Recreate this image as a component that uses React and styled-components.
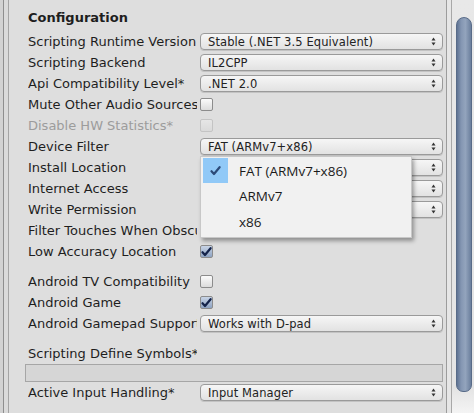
import React from "react";
import styled, { createGlobalStyle } from "styled-components";

const Global = createGlobalStyle`
  html, body { margin: 0; padding: 0; }
  body { width: 474px; height: 413px; overflow: hidden; background: #dedede; }
`;

const Window = styled.div`
  display: flex;
  width: 474px;
  height: 413px;
  background: #dedede;
  font-family: "DejaVu Sans", sans-serif;
  color: #1e1e1e;
`;

const Gutter = styled.div`
  width: 3px;
  background: #d2d2d2;
  border-right: 1px solid #8e8e8e;
  flex: none;
`;

const Gutter2 = styled.div`
  width: 4px;
  background: #dadada;
  border-right: 1px solid #a4a4a4;
  flex: none;
`;

const Panel = styled.div`
  flex: none;
  width: 438px;
  padding: 8px 0 0 19px;
  box-sizing: border-box;
  position: relative;
  border-right: 1px solid #9c9c9c;
`;

const Edge = styled.div`
  width: 4px;
  flex: none;
  background: #e6e6e6;
  border-right: 1px solid #a8a8a8;
`;

const Track = styled.div`
  flex: 1;
  background: linear-gradient(to bottom, #e8e8e8 0%, #e4e4e4 94%, #f4f4f4 100%);
  padding: 17px 2px 0 4px;
  box-sizing: border-box;
`;

const Thumb = styled.div`
  height: 373px;
  border-radius: 8px 8px 7px 7px;
  background: linear-gradient(to right, #5f7393 0%, #8496b2 30%, #93a4bd 60%, #6b7f9d 100%);
  border: 1px solid #586b88;
`;

const Heading = styled.div`
  height: 20px;
  line-height: 20px;
  margin-bottom: 3px;
  font-weight: bold;
  font-size: 13px;
`;

const Row = styled.div`
  display: grid;
  grid-template-columns: 172px 243px;
  align-items: center;
  height: 21px;
`;

const Label = styled.div`
  font-size: 13px;
  white-space: nowrap;
  overflow: hidden;
  max-width: 169px;
  color: ${(p) => (p.disabled ? "#9c9c9c" : "#1e1e1e")};
`;

const Gap = styled.div`
  height: 9px;
`;

const Popup = styled.div`
  display: flex;
  align-items: center;
  height: 17px;
  box-sizing: border-box;
  border: 1px solid #9a9a9a;
  border-radius: 4px;
  background: linear-gradient(to bottom, #f6f6f6, #e2e2e2);
  padding: 0 6px 0 7px;
  font-size: 11.5px;
  color: #222;
  box-shadow: 0 1px 0 rgba(0, 0, 0, 0.12);
`;

const PopupText = styled.span`
  flex: 1;
  white-space: nowrap;
  overflow: hidden;
  letter-spacing: 0.1px;
`;

const Check = styled.div`
  width: 13px;
  height: 13px;
  box-sizing: border-box;
  border: 1px solid ${(p) => (p.disabled ? "#c4c4c4" : "#8c8c8c")};
  border-radius: 2px;
  background: ${(p) =>
    p.checked
      ? "linear-gradient(to bottom, #c8d4e6, #8ea3c2)"
      : p.disabled
      ? "linear-gradient(to bottom, #e6e6e6, #dadada)"
      : "linear-gradient(to bottom, #fbfbfb, #dcdcdc)"};
  display: flex;
  align-items: center;
  justify-content: center;
`;

const TextField = styled.div`
  height: 18px;
  margin-left: -3px;
  width: 418px;
  box-sizing: border-box;
  border: 1px solid #a6a6a6;
  background: #d6d6d6;
`;

const Menu = styled.div`
  position: absolute;
  left: 191px;
  top: 156px;
  width: 212px;
  height: 82px;
  box-sizing: border-box;
  background: #f1f1f1;
  border: 1px solid #c8c8c8;
  box-shadow: 2px 3px 4px rgba(0, 0, 0, 0.35);
  padding-top: 1px;
  font-family: "Open Sans", "Noto Sans", sans-serif;
  font-size: 13.5px;
  color: #1a1a1a;
`;

const MenuItem = styled.div`
  display: flex;
  align-items: center;
  height: 25.5px;
`;

const Tick = styled.div`
  width: 25px;
  height: 25px;
  margin-left: 2px;
  background: ${(p) => (p.on ? "#91c9f7" : "transparent")};
  display: flex;
  align-items: center;
  justify-content: center;
`;

const ItemText = styled.span`
  margin-left: 11px;
  white-space: nowrap;
`;

const Arrows = () => (
  <svg width="5" height="9" viewBox="0 0 5 9">
    <path d="M2.5 0.5 L4.5 3.5 L0.5 3.5 Z" fill="#333" />
    <path d="M2.5 8.5 L4.5 5.5 L0.5 5.5 Z" fill="#333" />
  </svg>
);

const CheckMark = ({ color = "#14234a" }) => (
  <svg width="11" height="10" viewBox="0 0 11 10">
    <path d="M1.5 5.2 L4 8 L9.6 1.2" fill="none" stroke={color} strokeWidth="2.2" strokeLinecap="round" strokeLinejoin="round" />
  </svg>
);

const Select = ({ value }) => (
  <Popup>
    <PopupText>{value}</PopupText>
    <Arrows />
  </Popup>
);

const rows1 = [
  { label: "Scripting Runtime Version", select: "Stable (.NET 3.5 Equivalent)" },
  { label: "Scripting Backend", select: "IL2CPP" },
  { label: "Api Compatibility Level*", select: ".NET 2.0" },
  { label: "Mute Other Audio Sources", check: false },
  { label: "Disable HW Statistics*", check: false, disabled: true },
  { label: "Device Filter", select: "FAT (ARMv7+x86)" },
  { label: "Install Location", select: "Prefer External" },
  { label: "Internet Access", select: "Auto" },
  { label: "Write Permission", select: "Internal" },
  { label: "Filter Touches When Obscured", check: false },
  { label: "Low Accuracy Location", check: true },
];

const rows2 = [
  { label: "Android TV Compatibility", check: false },
  { label: "Android Game", check: true },
  { label: "Android Gamepad Support Level", select: "Works with D-pad" },
];

const renderRow = (r) => (
  <Row key={r.label}>
    <Label disabled={r.disabled}>{r.label}</Label>
    {r.select !== undefined ? (
      <Select value={r.select} />
    ) : r.label === "Filter Touches When Obscured" ? (
      <div />
    ) : (
      <Check checked={r.check} disabled={r.disabled}>
        {r.check && <CheckMark />}
      </Check>
    )}
  </Row>
);

const menuItems = ["FAT (ARMv7+x86)", "ARMv7", "x86"];

export default function App() {
  return (
    <Window>
      <Global />
      <Gutter />
      <Gutter2 />
      <Panel>
        <Heading>Configuration</Heading>
        {rows1.map(renderRow)}
        <Gap />
        {rows2.map(renderRow)}
        <Gap />
        <Row>
          <Label>Scripting Define Symbols*</Label>
          <div />
        </Row>
        <TextField />
        <Row>
          <Label>Active Input Handling*</Label>
          <Select value="Input Manager" />
        </Row>

        <Menu>
          {menuItems.map((m, i) => (
            <MenuItem key={m}>
              <Tick on={i === 0}>{i === 0 && <CheckMark color="#2c4a78" />}</Tick>
              <ItemText>{m}</ItemText>
            </MenuItem>
          ))}
        </Menu>
      </Panel>
      <Edge />
      <Track>
        <Thumb />
      </Track>
    </Window>
  );
}
